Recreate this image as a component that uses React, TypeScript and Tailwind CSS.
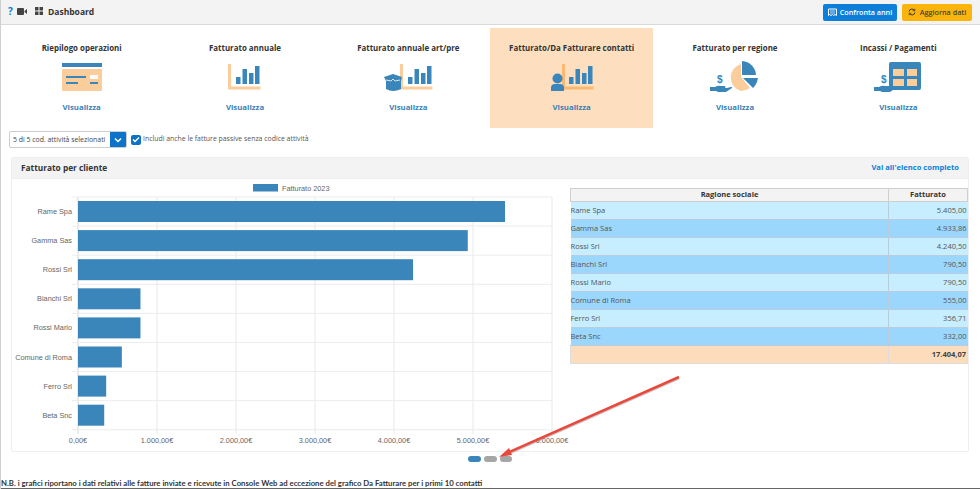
import React from "react";

const B = "#3a85b9";
const O = "#fbcd9b";

function IconCard() {
  return (
    <svg width="42" height="30" viewBox="0 0 42 30">
      <rect x="1" y="1" width="40" height="4" fill={B} />
      <rect x="1" y="7" width="40" height="22" rx="1" fill={O} />
      <rect x="5" y="14" width="20" height="2" fill={B} />
      <rect x="5" y="20" width="12" height="2" fill={B} />
      <rect x="29" y="13" width="8" height="4" rx="1" fill="#fff" />
      <rect x="29" y="20" width="8" height="2" fill={B} />
    </svg>
  );
}
function Bars({ x = 0 }: { x?: number }) {
  return (
    <g fill={B}>
      <rect x={x} y="13" width="4.5" height="7" />
      <rect x={x + 6.5} y="5" width="4.5" height="15" />
      <rect x={x + 13} y="9" width="4.5" height="11" />
      <rect x={x + 19} y="2" width="4.5" height="18" />
    </g>
  );
}
function IconAnnual() {
  return (
    <svg width="34" height="30" viewBox="0 0 34 30">
      <path d="M1.5 2v24h31" fill="none" stroke={O} strokeWidth="3" />
      <g transform="translate(8 2)"><Bars /></g>
    </svg>
  );
}
function IconBox() {
  return (
    <svg width="50" height="30" viewBox="0 0 50 30">
      <path d="M18.5 2v24h31" fill="none" stroke={O} strokeWidth="3" />
      <g transform="translate(25 2)"><Bars /></g>
      <path d="M1 15l9-3 9 3-1 4v8q-8 4-15 0v-8z" fill={B} />
      <path d="M3 18l5 1 2-2 2 2 5-1" fill="none" stroke="#fff" strokeWidth="0.8" />
    </svg>
  );
}
function IconPerson() {
  return (
    <svg width="44" height="30" viewBox="0 0 44 30">
      <path d="M13.5 2v24h30" fill="none" stroke="#fbb871" strokeWidth="3" />
      <g transform="translate(19 2)"><Bars /></g>
      <circle cx="7.5" cy="16.5" r="5" fill={B} />
      <path d="M1 29v-3q0-4 4-4h5q4 0 4 4v3z" fill={B} />
    </svg>
  );
}
function Hand({ x = 0 }: { x?: number }) {
  return (
    <g transform={`translate(${x} 0)`} fill={B}>
      <text x="7" y="22" fontSize="10" fontWeight="700" fontFamily="Liberation Sans, sans-serif">$</text>
      <path d="M0 30v-4h5q3-2 6-1h4q1 1 0 2h-3 5l4-1q2 0 1 1l-6 4H8l-2-1z" />
    </g>
  );
}
function IconPie() {
  return (
    <svg width="50" height="32" viewBox="0 0 50 32">
      <Hand />
      <path d="M31 4v13l9 11a15 15 0 0 1-9 3 14 14 0 0 1 0-27z" fill={O} transform="translate(0 -1)" />
      <path d="M32 0a15 15 0 0 1 14 14H32z" fill={B} />
      <path d="M33 17h15q-1 6-5 10z" fill={B} />
    </svg>
  );
}
function IconTable() {
  return (
    <svg width="48" height="32" viewBox="0 0 48 32">
      <Hand />
      <rect x="15" y="1" width="32" height="28" rx="2" fill={B} />
      <rect x="19" y="8" width="11" height="7" fill={O} />
      <rect x="33" y="8" width="10" height="7" fill={O} />
      <rect x="19" y="18" width="11" height="7" fill={O} />
      <rect x="33" y="18" width="10" height="7" fill={O} />
    </svg>
  );
}

const tiles = [
  { t: "Riepilogo operazioni", i: <IconCard /> },
  { t: "Fatturato annuale", i: <IconAnnual /> },
  { t: "Fatturato annuale art/pre", i: <IconBox /> },
  { t: "Fatturato/Da Fatturare contatti", i: <IconPerson />, on: true },
  { t: "Fatturato per regione", i: <IconPie /> },
  { t: "Incassi / Pagamenti", i: <IconTable /> },
];

const rows = [
  ["Rame Spa", "5.405,00", 5405],
  ["Gamma Sas", "4.933,86", 4933.86],
  ["Rossi Srl", "4.240,50", 4240.5],
  ["Bianchi Srl", "790,50", 790.5],
  ["Rossi Mario", "790,50", 790.5],
  ["Comune di Roma", "555,00", 555],
  ["Ferro Srl", "356,71", 356.71],
  ["Beta Snc", "332,00", 332],
] as const;

function Chart() {
  const x0 = 66, y0 = 18, w = 474, rh = 29.1;
  const font = "Liberation Sans, sans-serif";
  return (
    <svg width="558" height="272" viewBox="0 0 558 272" className="overflow-visible">
      <rect x="241" y="5" width="25" height="7.5" fill={B} />
      <text x="270" y="11.5" fontSize="7.3" fill="#666" fontFamily={font}>Fatturato 2023</text>
      {Array.from({ length: 7 }).map((_, i) => {
        const x = x0 + (i * w) / 6;
        return (
          <g key={i}>
            <line x1={x} x2={x} y1={y0} y2={y0 + 8 * rh + 4} stroke={i === 0 ? "#d5d5d5" : "#e8e8e8"} />
            <text x={x} y={y0 + 8 * rh + 13} textAnchor="middle" fontSize="7.3" fill="#666" fontFamily={font}>
              {["0,00€", "1.000,00€", "2.000,00€", "3.000,00€", "4.000,00€", "5.000,00€", "6.000,00€"][i]}
            </text>
          </g>
        );
      })}
      {Array.from({ length: 9 }).map((_, i) => (
        <line key={i} x1={x0 - 6} x2={x0 + w} y1={y0 + i * rh} y2={y0 + i * rh} stroke="#ececec" />
      ))}
      {rows.map((r, i) => (
        <g key={r[0]}>
          <rect x={x0} y={y0 + i * rh + 4} width={(r[2] / 6000) * w} height={21} fill={B} />
          <text x={x0 - 6} y={y0 + i * rh + 17} textAnchor="end" fontSize="7.3" fill="#666" fontFamily={font}>{r[0]}</text>
        </g>
      ))}
    </svg>
  );
}

export default function App() {
  return (
    <div className="relative w-[980px] h-[489px] overflow-hidden bg-white border-l border-[#cfcfcf] font-['Open_Sans',sans-serif] text-[#333]">
      <header className="h-[25px] bg-[#f3f3f3] border-b border-[#d9d9d9] flex items-center pl-[7px] pr-[8px]">
        <span className="text-[#0b7fd6] text-[10px] font-bold w-[9px] -mt-[2px]">?</span>
        <svg width="10" height="7" viewBox="0 0 10 7" className="mr-[8px] -mt-[2px]"><rect width="7" height="7" rx="1" fill="#444" /><path d="M7.5 3l2.5-2v5L7.5 4z" fill="#444" /></svg>
        <svg width="8" height="8" viewBox="0 0 8 8" className="mr-[5px] -mt-[2px]"><g fill="#444"><rect width="3.5" height="3.5" /><rect x="4.5" width="3.5" height="3.5" /><rect y="4.5" width="3.5" height="3.5" /><rect x="4.5" y="4.5" width="3.5" height="3.5" /></g></svg>
        <span className="text-[8.5px] font-bold mt-0">Dashboard</span>
        <button className="ml-auto w-[74px] h-[17px] bg-[#0c7fdb] rounded-[2px] text-white text-[7.2px] font-semibold flex items-center justify-center gap-[3px]">
          <svg width="9" height="9" viewBox="0 0 9 9"><path d="M.5 1h8v6.5L7 6.5 5.5 7.5 4.5 6.5 3 7.5 1.5 6.5.5 7.5z" fill="none" stroke="#fff" /><path d="M2 3h5M2 5h5" stroke="#fff" strokeWidth=".7" /></svg>
          Confronta anni
        </button>
        <button className="ml-[5px] w-[70px] h-[17px] bg-[#fbb40b] rounded-[2px] text-[#444] text-[7.2px] font-semibold flex items-center justify-center gap-[4px]">
          <svg width="8" height="8" viewBox="0 0 8 8" fill="none" stroke="#333"><path d="M1 3.5A3 3 0 0 1 6.5 2.5M7 4.5A3 3 0 0 1 1.5 5.5" /><path d="M6.8 .8v2H4.8M1.2 7.2v-2h2" strokeWidth=".8" /></svg>
          Aggiorna dati
        </button>
      </header>

      <div className="grid grid-cols-6 h-[100px] mt-[3px] -ml-px">
        {tiles.map((x) => (
          <div key={x.t} className={`flex flex-col items-center pt-[14px] ${x.on ? "bg-[#fddfc0]" : ""}`}>
            <div className="text-[7.9px] leading-[12px] font-bold whitespace-nowrap">{x.t}</div>
            <div className="h-[32px] mt-[7px] flex items-center justify-center">{x.i}</div>
            <div className="mt-[8px] text-[7.8px] leading-[12px] font-bold text-[#3a7fb5]">Visualizza</div>
          </div>
        ))}
      </div>

      <div className="flex items-center h-[17px] mt-[3px] ml-[8px]">
        <div className="w-[118px] h-[17px] flex border border-[#ccc] rounded-[2px] overflow-hidden">
          <div className="flex-1 text-[6.9px] leading-[15px] pl-[3px] text-[#444] whitespace-nowrap">5 di 5 cod. attività selezionati</div>
          <div className="w-[16px] bg-[#0c73c9] flex items-center justify-center">
            <svg width="8" height="6" viewBox="0 0 8 6"><path d="M1 1.5l3 3 3-3" stroke="#fff" strokeWidth="1.5" fill="none" /></svg>
          </div>
        </div>
        <div className="ml-[4px] w-[10px] h-[10px] bg-[#0c73c9] rounded-[2px] flex items-center justify-center">
          <svg width="8" height="7" viewBox="0 0 8 7"><path d="M1 3.5l2 2 4-4" stroke="#fff" strokeWidth="1.4" fill="none" /></svg>
        </div>
        <span className="ml-[2px] text-[6.9px] text-[#555] whitespace-nowrap">Includi anche le fatture passive senza codice attività</span>
      </div>

      <section className="ml-[10px] mt-[9px] h-[295px] w-[958px] border border-[#eeeeee] rounded-[2px]">
        <div className="h-[21px] bg-[#f3f3f3] border-b border-[#eeeeee] flex items-center justify-between pl-[9px] pr-[9px]">
          <span className="text-[8.3px] font-bold">Fatturato per cliente</span>
          <span className="text-[7.6px] font-bold text-[#0c7fdb]">Vai all'elenco completo</span>
        </div>
        <div className="flex">
          <Chart />
          <table className="mt-[9px] w-[398px] h-[175px] table-fixed border-collapse text-[7.5px] leading-none self-start">
            <thead>
              <tr className="h-[13px] bg-[#f3f3f3] font-bold">
                <th className="w-[318px] border border-[#cfcfcf] p-0">Ragione sociale</th>
                <th className="border border-[#cfcfcf] p-0">Fatturato</th>
              </tr>
            </thead>
            <tbody>
              {rows.map((r, i) => (
                <tr key={r[0]} className={`h-[18px] text-[#555] ${i % 2 ? "bg-[#9bd7fd]" : "bg-[#c6eefe]"}`}>
                  <td className="border-y border-[#bcd] pl-0 py-0 whitespace-nowrap">{r[0]}</td>
                  <td className="border-y border-l border-[#bcd] text-right pr-[1px] py-0">{r[1]}</td>
                </tr>
              ))}
              <tr className="h-[18px] bg-[#fddcbb] font-bold text-[#444]">
                <td className="border border-[#ddd] py-0"></td>
                <td className="border border-[#ddd] text-right pr-[1px] py-0">17.404,07</td>
              </tr>
            </tbody>
          </table>
        </div>
      </section>

      <div className="flex justify-center gap-[3px] mt-[4px] -ml-px w-[980px]">
        <span className="w-[13px] h-[6px] rounded-full bg-[#3a85b9]" />
        <span className="w-[13px] h-[6px] rounded-full bg-[#a6a6a6]" />
        <span className="w-[12px] h-[6px] rounded-full bg-[#a6a6a6]" />
      </div>

      <p className="absolute left-0 top-[477px] text-[7.75px] leading-[12px] font-bold whitespace-nowrap text-[#333] font-['Lato',sans-serif]">
        N.B. i grafici riportano i dati relativi alle fatture inviate e ricevute in Console Web ad eccezione del grafico Da Fatturare per i primi 10 contatti
      </p>
      <div className="absolute left-0 right-0 bottom-0 h-px bg-[#666]" />

      <svg className="absolute left-0 top-0 pointer-events-none" width="980" height="489" viewBox="0 0 980 489">
        <line x1="678" y1="378.5" x2="506" y2="454.5" stroke="#999" strokeWidth="2" opacity="0.5" />
        <line x1="678" y1="377" x2="506" y2="453" stroke="#e8493c" strokeWidth="2.5" />
        <path d="M498 457l10-9 3 7z" fill="#e8493c" />
      </svg>
    </div>
  );
}
